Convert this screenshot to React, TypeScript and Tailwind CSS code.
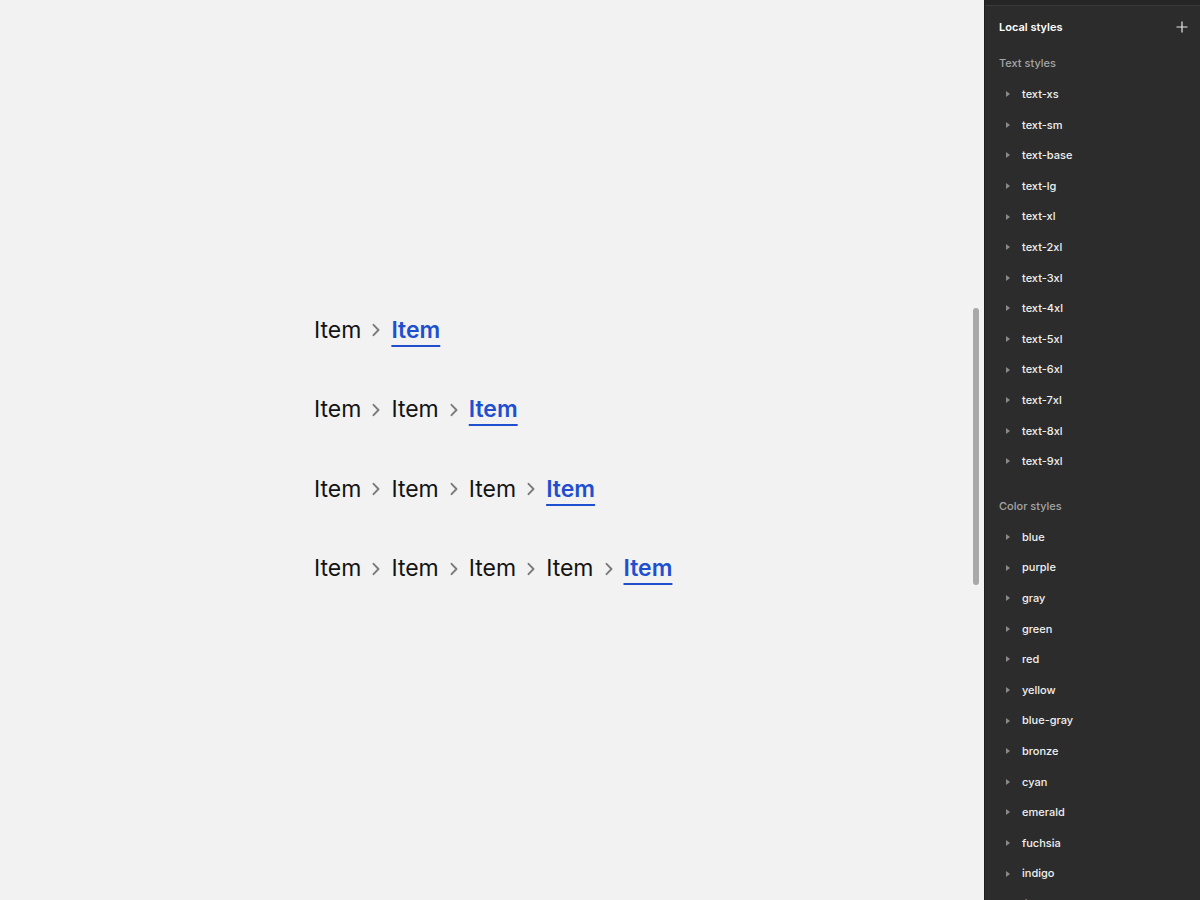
import React from "react";

const textStyles = ["text-xs","text-sm","text-base","text-lg","text-xl","text-2xl","text-3xl","text-4xl","text-5xl","text-6xl","text-7xl","text-8xl","text-9xl"];
const colorStyles = ["blue","purple","gray","green","red","yellow","blue-gray","bronze","cyan","emerald","fuchsia","indigo","lime"];

function Chevron() {
  return (
    <svg width="18" height="18" viewBox="0 0 18 18" className="mx-[6px] shrink-0" fill="none">
      <path d="M6.5 3.8 L11.5 9 L6.5 14.2" stroke="#7a7a7a" strokeWidth="1.9" strokeLinecap="round" strokeLinejoin="round" />
    </svg>
  );
}

function Crumbs({ n }: { n: number }) {
  const items = Array.from({ length: n });
  return (
    <div className="flex h-[32px] items-center">
      {items.map((_, i) => (
        <React.Fragment key={i}>
          {i < n - 1 ? (
            <>
              <span className="text-[23px] leading-none text-[#141414]">Item</span>
              <Chevron />
            </>
          ) : (
            <span className="text-[23px] leading-none font-semibold text-[#1f4fcf] underline decoration-2 underline-offset-[7px]">Item</span>
          )}
        </React.Fragment>
      ))}
    </div>
  );
}

function Row({ label }: { label: string }) {
  return (
    <div className="flex h-[30.6px] shrink-0 items-center">
      <span className="ml-[21px] inline-block h-0 w-0 border-y-[3px] border-l-[4px] border-y-transparent border-l-[#8a8a8a]" />
      <span className="ml-[12px] text-[11px] font-medium text-[#f0f0f0]">{label}</span>
    </div>
  );
}

export default function App() {
  return (
    <div className="flex h-[900px] w-[1200px] overflow-hidden" style={{ fontFamily: "Inter, 'Noto Sans', sans-serif" }}>
      <div className="relative flex-1 bg-[#f2f2f2]">
        <div className="flex flex-col gap-[47.5px] pl-[314px] pt-[314px]">
          <Crumbs n={2} />
          <Crumbs n={3} />
          <Crumbs n={4} />
          <Crumbs n={5} />
        </div>
        <div className="absolute left-[973px] top-[308px] h-[277px] w-[6px] rounded-full bg-[#a8a8a8]" />
      </div>
      <div className="flex h-[900px] w-[216px] shrink-0 flex-col overflow-hidden border-l border-[#1e1e1e] bg-[#2c2c2c]">
        <div className="h-[6px] shrink-0 border-b border-[#3a3a3a] bg-[#262626]" />
        <div className="flex h-[42px] shrink-0 items-center justify-between pl-[14px] pr-[12px]">
          <span className="text-[11px] font-semibold text-white">Local styles</span>
          <svg width="12" height="12" viewBox="0 0 12 12">
            <path d="M6 0.5V11.5M0.5 6H11.5" stroke="#e6e6e6" strokeWidth="1.2" />
          </svg>
        </div>
        <div className="flex h-[31px] shrink-0 items-center pl-[14px] text-[11px] font-medium text-[#a5a5a5]">Text styles</div>
        {textStyles.map((t) => (
          <Row key={t} label={t} />
        ))}
        <div className="mt-[14px] flex h-[31px] shrink-0 items-center pl-[14px] text-[11px] font-medium text-[#a5a5a5]">Color styles</div>
        {colorStyles.map((t) => (
          <Row key={t} label={t} />
        ))}
      </div>
    </div>
  );
}
